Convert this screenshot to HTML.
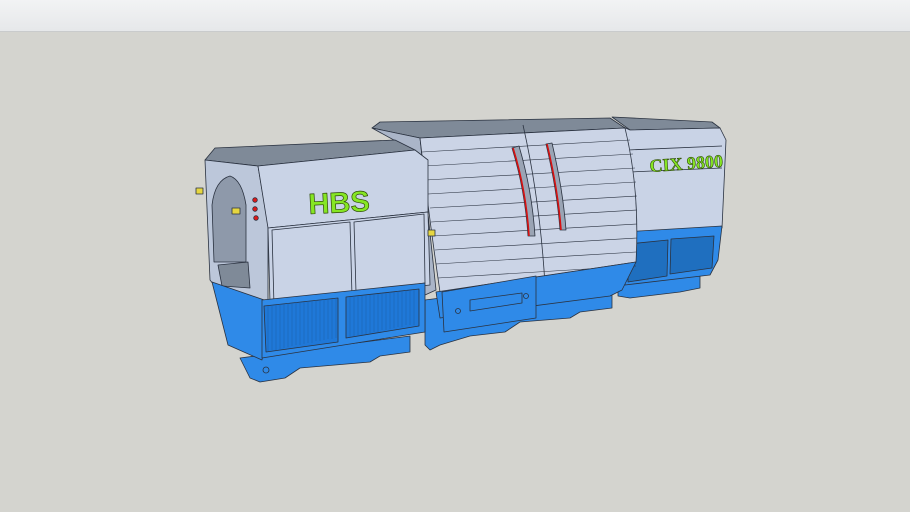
<!DOCTYPE html>
<html><head><meta charset="utf-8"><style>
html,body{margin:0;padding:0;width:910px;height:512px;overflow:hidden;background:#d4d4cf}
.bar{position:absolute;left:0;top:0;width:910px;height:31px;background:linear-gradient(#f2f3f4,#e6e8ea);border-bottom:1px solid #c9cbcc}
svg{position:absolute;left:0;top:0}
</style></head><body>
<div class="bar"></div>
<svg width="910" height="512" viewBox="0 0 910 512" stroke="#2a3240" stroke-width="0.8" stroke-linejoin="round">
<!-- right module -->
<polygon points="618,280 700,270 700,288 680,292 630,298 618,296" fill="#2f8ae8"/>
<polygon points="612,117 712,122 720,128 630,130" fill="#7f8a98"/>
<polygon points="612,122 630,130 720,128 726,140 722,228 625,232" fill="#c9d3e6"/>
<line x1="628" y1="150" x2="722" y2="146"/>
<line x1="630" y1="172" x2="722" y2="168"/>
<polygon points="622,232 722,226 718,260 710,275 625,285" fill="#2f8ae8"/>
<polygon points="628,244 668,240 667,276 628,282" fill="#1f6fbf"/>
<polygon points="671,239 714,236 712,268 670,274" fill="#1f6fbf"/>
<text x="650" y="172" font-family="Liberation Serif,serif" font-weight="bold" font-size="18" fill="#86e624" stroke="#2d4a08" stroke-width="0.6" transform="rotate(-4 650 172)">CIX 9800</text>
<!-- center module -->
<polygon points="425,300 612,276 612,308 580,312 570,318 520,322 505,332 470,336 440,345 430,350 425,345" fill="#2f8ae8"/>
<polygon points="372,128 380,122 610,118 625,128 420,138" fill="#7f8a98"/>
<polygon points="372,128 420,138 436,290 425,295 420,290 412,150" fill="#aab5c8"/>
<path d="M420,138 L625,128 Q640,190 636,262 L440,292 Q428,210 420,138 Z" fill="#cbd4e6"/>
<g stroke-width="0.6">
<line x1="422" y1="152" x2="630" y2="140"/><line x1="424" y1="166" x2="633" y2="154"/>
<line x1="426" y1="180" x2="635" y2="168"/><line x1="428" y1="194" x2="636" y2="182"/>
<line x1="430" y1="208" x2="637" y2="196"/><line x1="431" y1="222" x2="637" y2="210"/>
<line x1="433" y1="236" x2="637" y2="224"/><line x1="435" y1="250" x2="637" y2="238"/>
<line x1="436" y1="264" x2="636" y2="252"/><line x1="438" y1="278" x2="636" y2="266"/>
</g>
<path d="M523,125 Q540,200 545,285" fill="none"/>
<path d="M512,148 Q525,190 528,236 L535,236 Q532,190 519,146 Z" fill="#9aa4b4"/>
<path d="M513,148 Q526,190 529,236" fill="none" stroke="#d81010" stroke-width="1.6"/>
<path d="M546,144 Q557,190 560,230 L566,230 Q563,190 552,143 Z" fill="#9aa4b4"/>
<path d="M547,144 Q558,190 561,230" fill="none" stroke="#d81010" stroke-width="1.6"/>
<polygon points="436,292 636,262 622,290 610,296 440,318" fill="#2f8ae8"/>
<polygon points="442,292 536,276 536,318 444,332" fill="#2f8ae8"/>
<polygon points="470,300 522,293 522,303 470,311" fill="#2f8ae8"/>
<circle cx="458" cy="311" r="2.5" fill="#2f8ae8"/><circle cx="526" cy="296" r="2.5" fill="#2f8ae8"/>
<!-- left module -->
<polygon points="240,358 410,336 410,352 380,356 370,362 300,368 285,378 260,382 250,378" fill="#2f8ae8"/>
<polygon points="205,160 215,148 395,140 415,150 258,166" fill="#7f8a98"/>
<polygon points="205,160 258,166 268,225 268,305 260,300 255,300 218,290 210,280" fill="#bcc7da"/>
<path d="M212,205 Q215,180 230,176 Q242,180 246,205 L246,262 L214,262 Z" fill="#8e99aa"/>
<polygon points="218,265 248,262 250,288 222,286" fill="#7f8a98"/>
<polygon points="258,166 415,150 428,160 428,212 268,228" fill="#c9d3e6"/>
<polygon points="268,228 428,212 430,285 270,302" fill="#c9d3e6"/>
<polygon points="272,230 350,222 352,296 274,306" fill="#c9d3e6"/>
<polygon points="354,222 424,214 425,283 356,292" fill="#c9d3e6"/>
<text x="309" y="214" font-family="Liberation Sans,sans-serif" font-weight="bold" font-size="29" fill="#86e624" stroke="#2d4a08" stroke-width="0.7" transform="rotate(-3 310 214)">HBS</text>
<circle cx="255" cy="200" r="2.3" fill="#e01818"/><circle cx="255" cy="209" r="2.3" fill="#e01818"/><circle cx="256" cy="218" r="2.3" fill="#e01818"/>
<rect x="196" y="188" width="7" height="6" fill="#e6d640"/><rect x="232" y="208" width="8" height="6" fill="#e6d640"/><rect x="428" y="230" width="7" height="6" fill="#e6d640"/>
<polygon points="212,282 270,302 262,360 228,345" fill="#2f8ae8"/>
<polygon points="262,300 425,283 425,332 262,358" fill="#2f8ae8"/>
<g fill="#1f78d8">
<polygon points="264,306 338,298 338,342 266,352"/>
<polygon points="346,297 419,289 419,326 346,338"/>
</g>
<g stroke="#1a5fa8" stroke-width="0.5">
<path d="M268,306v45M272,305v45M276,305v45M280,304v45M284,304v44M288,303v44M292,303v43M296,302v43M300,302v43M304,302v42M308,301v42M312,301v42M316,300v41M320,300v41M324,299v41M328,299v40M332,299v40M336,298v40"/>
<path d="M350,297v40M354,296v40M358,296v39M362,296v39M366,295v39M370,295v38M374,294v38M378,294v38M382,293v37M386,293v37M390,292v37M394,292v36M398,291v36M402,291v36M406,290v35M410,290v35M414,290v35"/>
</g>
<circle cx="266" cy="370" r="3" fill="#2f8ae8"/>
</svg>
</body></html>
